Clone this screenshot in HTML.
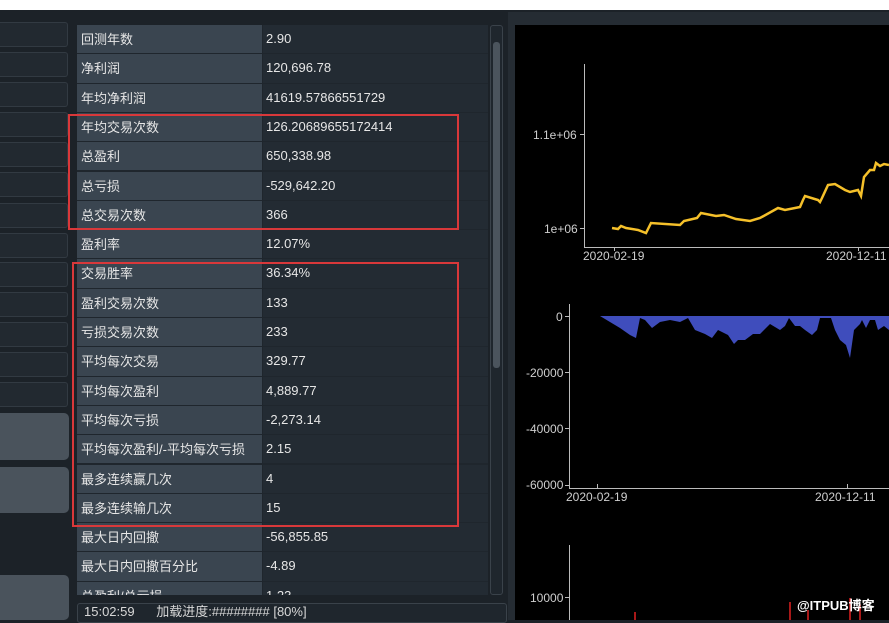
<!DOCTYPE html>
<html><head><meta charset="utf-8"><style>
*{margin:0;padding:0;box-sizing:border-box}
body{width:889px;height:620px;overflow:hidden;background:#1c2228;font-family:"Liberation Sans","Noto Sans CJK SC",sans-serif;position:relative}
.top{position:absolute;left:0;top:0;width:889px;height:10px;background:#fff}
.l{position:absolute;left:0;width:68px;height:25px;background:#222930;border:1px solid #323a42;border-left:none;border-radius:0 3px 3px 0}
.btn{position:absolute;left:0;width:69px;background:#4a535c;border-radius:0 5px 5px 0}
.tbl{position:absolute;left:77px;top:25px;width:411px;height:570px;overflow:hidden;background:#1f262d}
.r{position:absolute;left:0;width:411px;height:28.3px;font-size:13px;color:#e6e6e6}
.r .a{position:absolute;left:0;top:0;width:185px;height:100%;background:#3a4550;padding-left:4px;line-height:29px}
.r .b{position:absolute;left:186px;top:0;width:225px;height:100%;background:#232b33;padding-left:3px;line-height:28px}
.red{position:absolute;border:2px solid #d9383a}
.sb{position:absolute;left:490px;top:25px;width:13px;height:570px;background:#1f262d;border:1px solid #3a424a;border-radius:3px}
.sb i{position:absolute;left:2px;top:16px;width:7px;height:326px;background:#4b545d;border-radius:3px}
.stat{position:absolute;left:77px;top:603px;width:430px;height:20px;border:1px solid #3a424a;border-radius:3px;background:#1f262d;color:#d8d8d8;font-size:13px;line-height:16px;padding-left:6px}
.chart{position:absolute;left:515px;top:25px;width:374px;height:595px;background:#000}
.pan{position:absolute;left:508px;top:12px;width:381px;height:608px;background:#252c33}
</style></head><body>
<div class="top"></div>
<div class="l" style="top:22px"></div><div class="l" style="top:52px"></div><div class="l" style="top:82px"></div><div class="l" style="top:112px"></div><div class="l" style="top:142px"></div><div class="l" style="top:172px"></div><div class="l" style="top:203px"></div><div class="l" style="top:233px"></div><div class="l" style="top:262px"></div><div class="l" style="top:292px"></div><div class="l" style="top:322px"></div><div class="l" style="top:352px"></div><div class="l" style="top:382px"></div>
<div class="btn" style="top:413px;height:47px"></div>
<div class="btn" style="top:467px;height:46px"></div>
<div class="btn" style="top:575px;height:45px"></div>
<div class="tbl">
<div class="r" style="top:0"><div class="a">回测年数</div><div class="b">2.90</div></div>
<div class="r" style="top:29.3px"><div class="a">净利润</div><div class="b">120,696.78</div></div>
<div class="r" style="top:58.6px"><div class="a">年均净利润</div><div class="b">41619.57866551729</div></div>
<div class="r" style="top:87.9px"><div class="a">年均交易次数</div><div class="b">126.20689655172414</div></div>
<div class="r" style="top:117.2px"><div class="a">总盈利</div><div class="b">650,338.98</div></div>
<div class="r" style="top:146.5px"><div class="a">总亏损</div><div class="b">-529,642.20</div></div>
<div class="r" style="top:175.8px"><div class="a">总交易次数</div><div class="b">366</div></div>
<div class="r" style="top:205.1px"><div class="a">盈利率</div><div class="b">12.07%</div></div>
<div class="r" style="top:234.4px"><div class="a">交易胜率</div><div class="b">36.34%</div></div>
<div class="r" style="top:263.7px"><div class="a">盈利交易次数</div><div class="b">133</div></div>
<div class="r" style="top:293px"><div class="a">亏损交易次数</div><div class="b">233</div></div>
<div class="r" style="top:322.3px"><div class="a">平均每次交易</div><div class="b">329.77</div></div>
<div class="r" style="top:351.6px"><div class="a">平均每次盈利</div><div class="b">4,889.77</div></div>
<div class="r" style="top:380.9px"><div class="a">平均每次亏损</div><div class="b">-2,273.14</div></div>
<div class="r" style="top:410.2px"><div class="a">平均每次盈利/-平均每次亏损</div><div class="b">2.15</div></div>
<div class="r" style="top:439.5px"><div class="a">最多连续赢几次</div><div class="b">4</div></div>
<div class="r" style="top:468.8px"><div class="a">最多连续输几次</div><div class="b">15</div></div>
<div class="r" style="top:498.1px"><div class="a">最大日内回撤</div><div class="b">-56,855.85</div></div>
<div class="r" style="top:527.4px"><div class="a">最大日内回撤百分比</div><div class="b">-4.89</div></div>
<div class="r" style="top:556.7px"><div class="a">总盈利/总亏损</div><div class="b">1.23</div></div>
</div>
<div class="red" style="left:68px;top:114px;width:391px;height:116px"></div>
<div class="red" style="left:72px;top:262px;width:387px;height:265px"></div>
<div class="sb"><i></i></div>
<div class="stat">15:02:59 &nbsp;&nbsp;&nbsp;&nbsp;&nbsp;加载进度:######## [80%]</div>
<div class="pan"></div>
<div class="chart"></div>
<svg style="position:absolute;left:0;top:0" width="889" height="620" font-family="Liberation Sans" font-size="12" fill="#cfcfcf">
<g stroke="#bbb" stroke-width="1" fill="none">
<path d="M584.5 64V247.5H889M614.5 247v4M858.5 247v4M580 134.5h4M580 228.5h4"/>
<path d="M569.5 304V488.5H889M597.5 488v-4M847.5 488v-4M565 316.5h4M565 372.5h4M565 428.5h4M565 485.5h4"/>
<path d="M569.5 545V620M565 597.5h4"/>
</g>
<text x="533" y="139">1.1e+06</text><text x="544" y="233">1e+06</text>
<text x="583" y="260">2020-02-19</text><text x="826" y="260">2020-12-11</text>
<text x="556" y="321">0</text><text x="526" y="377">-20000</text><text x="526" y="433">-40000</text><text x="526" y="489">-60000</text>
<text x="566" y="501">2020-02-19</text><text x="815" y="501">2020-12-11</text>
<text x="530" y="602">10000</text>
<path fill="#3f4dbc" d="M597 316L889 316L889 330L884 326L878 330L875 320L870 320L866 328L862 320L860 324L854 330L850 358L846 345L840 340L835 330L831 318L820 318L817 330L812 335L805 330L800 326L795 326L789 318L785 326L780 330L770 324L760 334L753 334L745 340L738 340L734 344L728 335L718 330L712 338L705 334L695 330L688 318L680 322L670 320L660 322L652 328L645 320L640 318L636 338L630 335L620 328L610 322L600 316Z"/>
<path fill="none" stroke="#f5c02a" stroke-width="2.5" d="M612 228L618 229L621 226L626 228L638 230L646 233L651 223L680 225L684 221L697 218L701 213L716 216L724 215L736 219L750 221L760 218L778 208L785 210L800 207L803 200L805 196L818 200L820 202L822 198L828 185L835 184L845 190L850 192L858 190L861 196L864 177L870 170L874 170L876 163L880 166L884 164L889 165"/>
<path stroke="#e02020" stroke-width="1.5" d="M635 612V620M790 602V620M808 610V620M850 598V620M860 604V620"/>
<text x="797" y="610" fill="#fff" font-weight="bold" font-family="Liberation Sans,Noto Sans CJK SC,sans-serif" font-size="13">@ITPUB博客</text>
</svg>
</body></html>
